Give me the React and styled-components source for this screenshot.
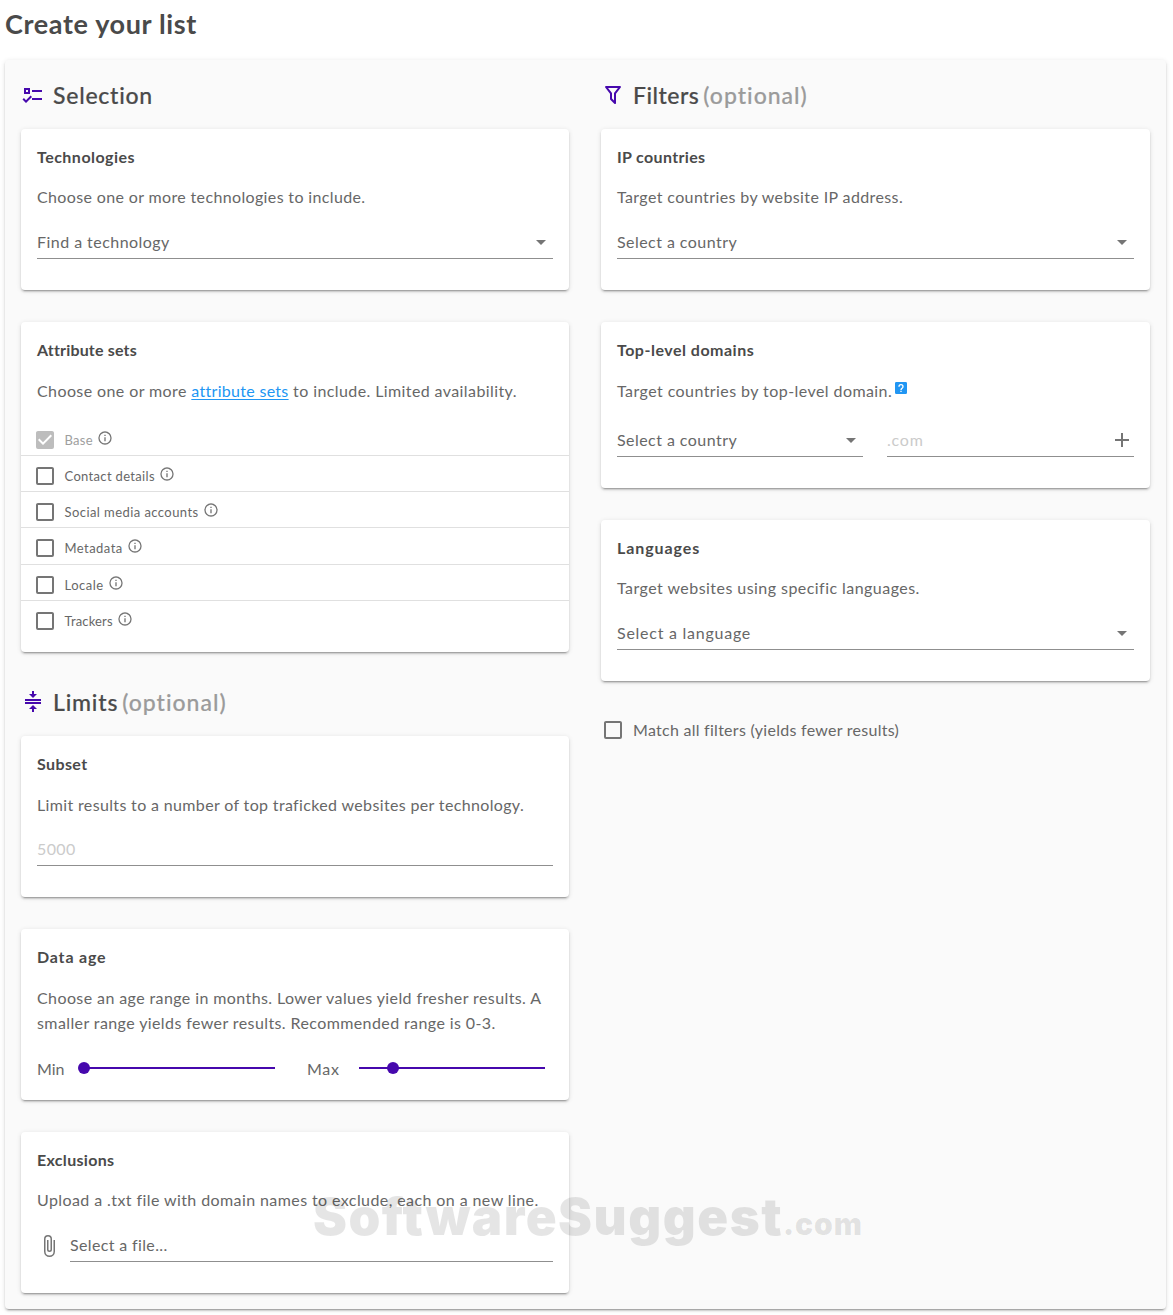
import React, { useState } from "react";
import styled, { createGlobalStyle } from "styled-components";

const GlobalStyle = createGlobalStyle`
  *, *::before, *::after { box-sizing: border-box; }
  body {
    margin: 0;
    background: #fff;
    color: #676767;
    font-family: Lato, "Open Sans", sans-serif;
    font-size: 16px;
    font-variant-ligatures: none;
  }
`;

const accent = "#4608ad";

const icons = {
  checks:
    "M3,5H9V11H3V5M5,7V9H7V7H5M11,7H21V9H11V7M11,15H21V17H11V15M5,20L1.5,16.5L2.91,15.09L5,17.17L9.59,12.59L11,14L5,20Z",
  filter:
    "M15,19.88C15.04,20.18 14.94,20.5 14.71,20.71C14.32,21.1 13.69,21.1 13.3,20.71L9.29,16.7C9.06,16.47 8.96,16.16 9,15.87V10.75L4.21,4.62C3.87,4.19 3.95,3.56 4.38,3.22C4.57,3.08 4.78,3 5,3V3H19V3C19.22,3 19.43,3.08 19.62,3.22C20.05,3.56 20.13,4.19 19.79,4.62L15,10.75V19.88M7.04,5L11,10.06V15.58L13,17.58V10.05L16.96,5H7.04Z",
  collapse:
    "M4,12H20V14H4V12M4,9H20V11H4V9M16,4L12,8L8,4H11V1H13V4H16M8,19L12,15L16,19H13V22H11V19H8Z",
  info:
    "M11,9H13V7H11M12,20C7.59,20 4,16.41 4,12C4,7.59 7.59,4 12,4C16.41,4 20,7.59 20,12C20,16.41 16.41,20 12,20M12,2A10,10 0 0,0 2,12A10,10 0 0,0 12,22A10,10 0 0,0 22,12A10,10 0 0,0 12,2M11,17H13V11H11V17Z",
  help:
    "M11,18H13V16H11V18M12,6A4,4 0 0,0 8,10H10A2,2 0 0,1 12,8A2,2 0 0,1 14,10C14,12 11,11.75 11,15H13C13,12.75 16,12.5 16,10A4,4 0 0,0 12,6M5,3H19A2,2 0 0,1 21,5V19A2,2 0 0,1 19,21H5A2,2 0 0,1 3,19V5A2,2 0 0,1 5,3Z",
  box:
    "M19,3H5C3.89,3 3,3.89 3,5V19A2,2 0 0,0 5,21H19A2,2 0 0,0 21,19V5C21,3.89 20.1,3 19,3M19,5V19H5V5H19Z",
  boxChecked:
    "M10,17L5,12L6.41,10.58L10,14.17L17.59,6.58L19,8M19,3H5C3.89,3 3,3.89 3,5V19A2,2 0 0,0 5,21H19A2,2 0 0,0 21,19V5C21,3.89 20.1,3 19,3Z",
  down: "M7,10L12,15L17,10H7Z",
  plus: "M19,13H13V19H11V13H5V11H11V5H13V11H19V13Z",
  clip:
    "M16.5,6V17.5A4,4 0 0,1 12.5,21.5A4,4 0 0,1 8.5,17.5V5A2.5,2.5 0 0,1 11,2.5A2.5,2.5 0 0,1 13.5,5V15.5A1,1 0 0,1 12.5,16.5A1,1 0 0,1 11.5,15.5V6H10V15.5A2.5,2.5 0 0,0 12.5,18A2.5,2.5 0 0,0 15,15.5V5A4,4 0 0,0 11,1A4,4 0 0,0 7,5V17.5A5.5,5.5 0 0,0 12.5,23A5.5,5.5 0 0,0 18,17.5V6H16.5Z",
};

const Svg = styled.svg`
  display: block;
  flex: none;
  width: ${(p) => p.$size}px;
  height: ${(p) => p.$size}px;
  fill: ${(p) => p.$color};
`;

const Icon = ({ name, size = 24, color = "#757575" }) => (
  <Svg viewBox="0 0 24 24" $size={size} $color={color} aria-hidden="true">
    <path d={icons[name]} />
  </Svg>
);

const Page = styled.main`
  position: relative;
  width: 1173px;
  height: 1315px;
  padding: 0 6px 0 5px;
  overflow: hidden;
`;

const PageTitle = styled.h1`
  margin: 0;
  height: 60px;
  line-height: 48px;
  font-size: 27px;
  font-weight: 700;
  letter-spacing: 0.64px;
  color: #4a4a4a;
`;

const elevation =
  "0 3px 1px -2px rgba(0,0,0,.2), 0 2px 2px 0 rgba(0,0,0,.14), 0 1px 5px 0 rgba(0,0,0,.12)";

const Panel = styled.div`
  display: grid;
  grid-template-columns: 548px 549px;
  column-gap: 32px;
  align-items: start;
  height: 1249px;
  width: 1161px;
  padding: 16px;
  border-radius: 4px;
  background: #fafafa;
  box-shadow: ${elevation};
`;

const Column = styled.div`
  display: flex;
  flex-direction: column;
`;

const SectionTitle = styled.h2`
  display: flex;
  align-items: center;
  height: 39px;
  margin: ${(p) => p.$top || 0}px 0 14px;
  padding-bottom: 2px;
  font-size: 23px;
  font-weight: 500;
  letter-spacing: ${(p) => p.$ls}px;
  -webkit-text-stroke: 0.2px currentColor;
  color: #4a4a4a;
  white-space: nowrap;

  ${Svg} { margin: 0 8.5px 0 -0.5px; }
`;

const Optional = styled.span`
  margin-left: 4px;
  letter-spacing: 1px;
  color: #9b9b9b;
`;

const Stack = styled.div`
  display: flex;
  flex-direction: column;
  gap: 32px;
`;

const CardBox = styled.section`
  padding: 16px 16px ${(p) => p.$bottom ?? 31}px;
  border-radius: 4px;
  background: #fff;
  box-shadow: ${elevation};
`;

const CardTitle = styled.h3`
  margin: 0;
  height: 26px;
  line-height: 24px;
  font-size: 16px;
  font-weight: 700;
  letter-spacing: ${(p) => p.$ls}px;
  color: #4a4a4a;
`;

const Description = styled.p`
  display: flex;
  flex-direction: ${(p) => (p.$lines ? "column" : "row")};
  margin: ${(p) => p.$top ?? 13}px 0 0;
  padding-bottom: 1px;
  line-height: 25px;
  letter-spacing: ${(p) => p.$ls}px;
  white-space: pre;
`;

const Link = styled.a`
  color: #2196f3;
  text-decoration: underline;
  text-underline-offset: 2px;
  text-decoration-thickness: 1px;
  letter-spacing: 0.3px;
`;

const HelpMark = styled.sup`
  margin: 2px 0 0 0.5px;
  height: 16px;
  line-height: 0;
`;

const Field = styled.div`
  display: flex;
  align-items: center;
  justify-content: space-between;
  flex: 1;
  height: 32px;
  padding-bottom: 1px;
  margin-top: ${(p) => p.$top ?? 0}px;
  border-bottom: 1px solid #8f8f8f;
  letter-spacing: ${(p) => p.$ls}px;
  color: ${(p) => (p.$placeholder ? "#cbcbcb" : "#676767")};
  white-space: nowrap;
  line-height: 20px;

  ${Svg} { margin-right: 0.5px; }
`;

const FieldRow = styled.div`
  display: grid;
  grid-template-columns: ${(p) => p.$cols};
  column-gap: ${(p) => p.$gap}px;
  margin-top: ${(p) => p.$top}px;
  align-items: center;
`;

const Attributes = styled.ul`
  list-style: none;
  margin: 16px -16px 0;
  padding: 0;
`;

const Attribute = styled.li`
  display: flex;
  align-items: center;
  height: ${(p) => p.$h}px;
  padding: ${(p) => (p.$h > 36 ? 3 : 4)}px 0 0 11.5px;
  border-bottom: 1px solid ${(p) => (p.$last ? "transparent" : "#e0e0e0")};
  font-size: 13px;
  letter-spacing: ${(p) => p.$ls}px;
  color: ${(p) => (p.$disabled ? "#9e9e9e" : "#676767")};
`;

const CheckButton = styled.button`
  display: block;
  margin: 0 8px 0 0;
  padding: 0;
  border: 0;
  background: none;
  cursor: pointer;
`;

const InfoMark = styled.span`
  margin: 0 0 4px 4px;
`;

const RangeRow = styled.div`
  display: flex;
  gap: 32px;
  height: 32px;
  margin-top: 16px;
`;

const Range = styled.label`
  display: grid;
  grid-template-columns: ${(p) => p.$label}px ${(p) => p.$track}px;
  align-items: center;
  letter-spacing: ${(p) => p.$ls}px;
`;

const Track = styled.div`
  position: relative;
  height: 2px;
  background: ${accent};
`;

const Thumb = styled.span`
  position: absolute;
  top: -5px;
  width: 12px;
  height: 12px;
  margin-left: -6px;
  border-radius: 50%;
  background: ${accent};
`;

const MatchRow = styled.label`
  display: flex;
  align-items: center;
  margin-top: 36px;
  height: 25px;
  line-height: 22px;
  letter-spacing: 0.27px;
`;

const Watermark = styled.div`
  position: absolute;
  left: 313px;
  top: 1186px;
  display: flex;
  align-items: baseline;
  line-height: 62px;
  font-family: Inter, sans-serif;
  font-weight: 900;
  font-size: 51px;
  letter-spacing: 1.5px;
  color: rgba(0, 0, 0, 0.1);
  white-space: nowrap;
  pointer-events: none;
`;

const WatermarkSuffix = styled.span`
  font-size: 30px;
  letter-spacing: 0.9px;
`;

const Card = ({ title, ls, bottom, children }) => (
  <CardBox $bottom={bottom}>
    <CardTitle $ls={ls}>{title}</CardTitle>
    {children}
  </CardBox>
);

const Check = ({ disabled, initial = false }) => {
  const [on, setOn] = useState(initial);
  return (
    <CheckButton type="button" disabled={disabled} onClick={() => setOn(!on)}>
      <Icon name={on ? "boxChecked" : "box"} color={disabled ? "#bdbdbd" : "#757575"} />
    </CheckButton>
  );
};

const Slider = ({ value }) => (
  <Track>
    <Thumb style={{ left: `${value}%` }} />
  </Track>
);

const attributes = [
  { label: "Base", h: 36, ls: 0.3, disabled: true },
  { label: "Contact details", h: 36, ls: 0.33 },
  { label: "Social media accounts", h: 36, ls: 0.43 },
  { label: "Metadata", h: 37, ls: 0.45 },
  { label: "Locale", h: 36, ls: 0.5 },
  { label: "Trackers", h: 36, ls: 0.15 },
];

export default function App() {
  return (
    <Page>
      <GlobalStyle />
      <PageTitle>Create your list</PageTitle>
      <Panel>
        <Column>
          <SectionTitle $ls={0.75}>
            <Icon name="checks" color={accent} />
            Selection
          </SectionTitle>
          <Stack>
            <Card title="Technologies" ls={0.48}>
              <Description $ls={0.36}>Choose one or more technologies to include.</Description>
              <Field $top={17} $ls={0.46}>
                Find a technology
                <Icon name="down" />
              </Field>
            </Card>
            <Card title="Attribute sets" ls={0.17} bottom={15}>
              <Description $top={14} $ls={0.4}>
                Choose one or more <Link href="#">attribute sets</Link> to include. Limited availability.
              </Description>
              <Attributes>
                {attributes.map((a, i) => (
                  <Attribute
                    key={a.label}
                    $h={a.h}
                    $ls={a.ls}
                    $disabled={a.disabled}
                    $last={i === attributes.length - 1}
                  >
                    <Check disabled={a.disabled} initial={a.disabled} />
                    {a.label}
                    <InfoMark>
                      <Icon name="info" size={16} />
                    </InfoMark>
                  </Attribute>
                ))}
              </Attributes>
            </Card>
          </Stack>

          <SectionTitle $top={31} $ls={0.8}>
            <Icon name="collapse" color={accent} />
            Limits<Optional>(optional)</Optional>
          </SectionTitle>
          <Stack>
            <Card title="Subset" ls={0.4}>
              <Description $top={14} $ls={0.35}>
                Limit results to a number of top traficked websites per technology.
              </Description>
              <Field $top={16} $ls={0.4} $placeholder>
                5000
              </Field>
            </Card>
            <Card title="Data age" ls={0.82} bottom={16}>
              <Description $top={14} $lines $ls={0.4}>
                <span>Choose an age range in months. Lower values yield fresher results. A</span>
                <span>smaller range yields fewer results. Recommended range is 0-3.</span>
              </Description>
              <RangeRow>
                <Range $label={47} $track={191} $ls={-0.1}>
                  Min
                  <Slider value={0} />
                </Range>
                <Range $label={52} $track={186} $ls={0.7}>
                  Max
                  <Slider value={18.2} />
                </Range>
              </RangeRow>
            </Card>
            <Card title="Exclusions" ls={0.32}>
              <Description $ls={0.41}>
                Upload a .txt file with domain names to exclude, each on a new line.
              </Description>
              <FieldRow $cols="24px 1fr" $gap={9} $top={17}>
                <Icon name="clip" />
                <Field $ls={0.36}>Select a file...</Field>
              </FieldRow>
            </Card>
          </Stack>
        </Column>

        <Column>
          <SectionTitle $ls={0.5}>
            <Icon name="filter" color={accent} />
            Filters<Optional>(optional)</Optional>
          </SectionTitle>
          <Stack>
            <Card title="IP countries" ls={0.34}>
              <Description $ls={0.38}>Target countries by website IP address.</Description>
              <Field $top={17} $ls={0.45}>
                Select a country
                <Icon name="down" />
              </Field>
            </Card>
            <Card title="Top-level domains" ls={0.5}>
              <Description $top={14} $ls={0.43}>
                Target countries by top-level domain.
                <HelpMark>
                  <Icon name="help" size={16} color="#2196f3" />
                </HelpMark>
              </Description>
              <FieldRow $cols="246px 247px" $gap={24} $top={21}>
                <Field $ls={0.45}>
                  Select a country
                  <Icon name="down" />
                </Field>
                <Field $ls={0.8} $placeholder>
                  .com
                  <Icon name="plus" />
                </Field>
              </FieldRow>
            </Card>
            <Card title="Languages" ls={0.92}>
              <Description $ls={0.45}>Target websites using specific languages.</Description>
              <Field $top={17} $ls={0.75}>
                Select a language
                <Icon name="down" />
              </Field>
            </Card>
          </Stack>
          <MatchRow>
            <Check />
            Match all filters (yields fewer results)
          </MatchRow>
        </Column>
      </Panel>
      <Watermark>
        SoftwareSuggest<WatermarkSuffix>.com</WatermarkSuffix>
      </Watermark>
    </Page>
  );
}
